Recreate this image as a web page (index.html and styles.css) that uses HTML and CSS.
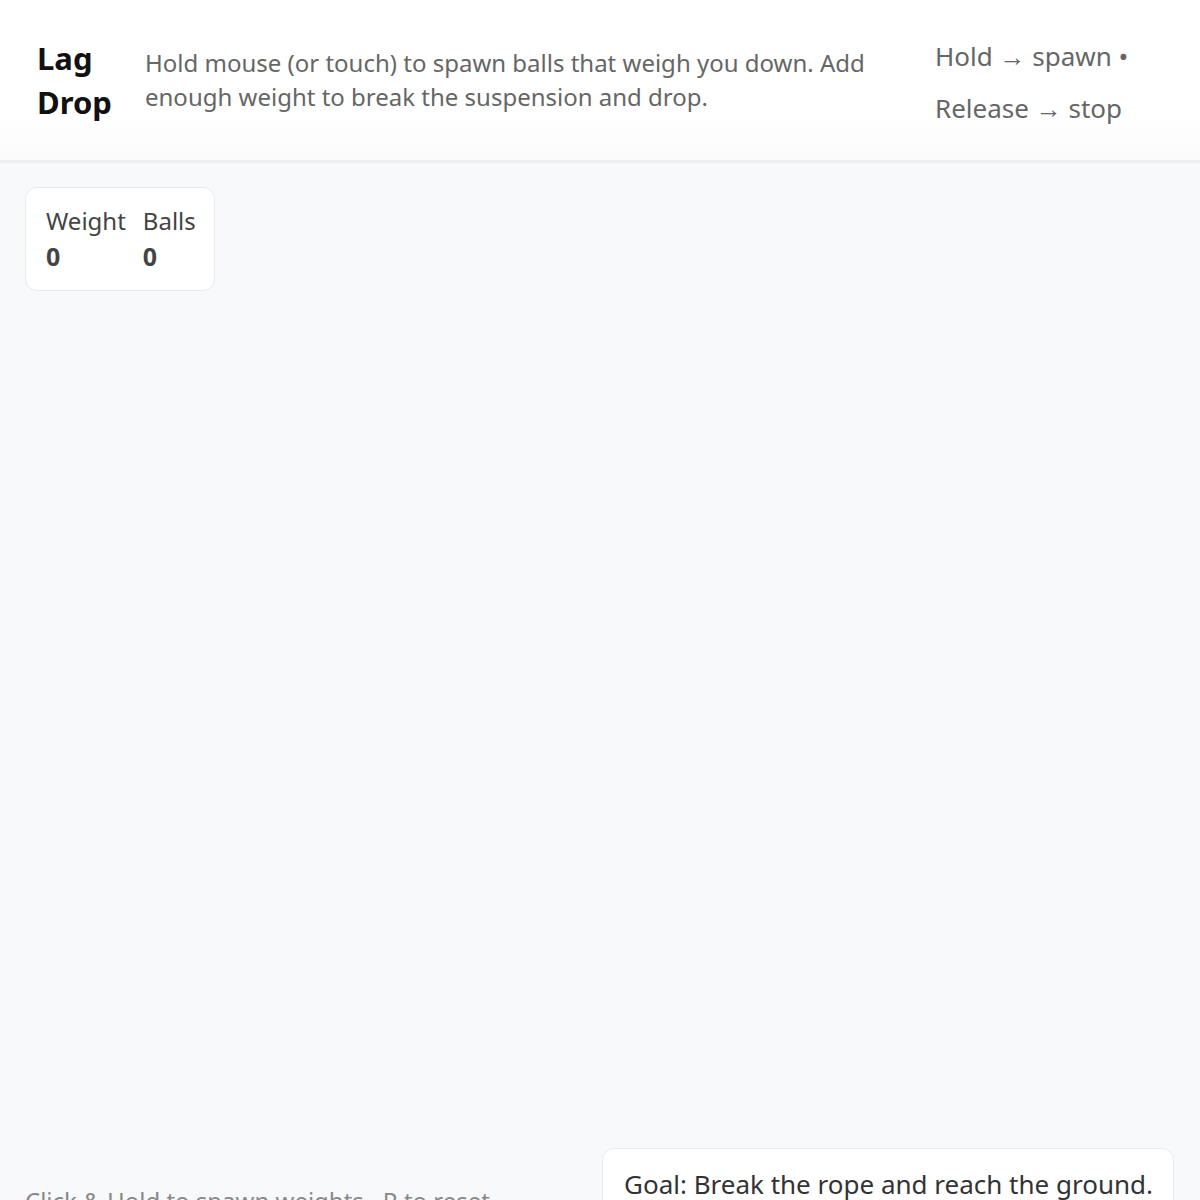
FILE: index.html
```html
<!DOCTYPE html>
<html lang="en">
  <head>
    <meta charset="utf-8">
    <title>Lag Drop</title>
    <meta name="viewport" content="width=device-width">
    <link rel="stylesheet" href="styles.css">
  </head>
  <body>
    <header class="top">
      <h1 class="title">Lag Drop</h1>
      <p class="desc">Hold mouse (or touch) to spawn balls that weigh you down. Add enough weight to break the suspension and drop.</p>
      <div class="help">Hold → spawn • Release → stop</div>
    </header>
    <main class="stage">
      <div class="stats">
        <div class="stat">
          <span class="label">Weight</span>
          <span class="value">0</span>
        </div>
        <div class="stat">
          <span class="label">Balls</span>
          <span class="value">0</span>
        </div>
      </div>
      <div class="bottom">
        <div class="hint">Click &amp; Hold to spawn weights · R to reset</div>
        <div class="goal">Goal: Break the rope and reach the ground.</div>
      </div>
    </main>
  </body>
</html>
```

FILE: styles.css
```css
html, body {
    margin: 0;
    background: #f8f9fb;
    font-family: "Noto Sans", "Open Sans", sans-serif;
    overflow: hidden;
}

.top {
    display: flex;
    align-items: center;
    height: 163px;
    padding: 0 36px 0 37px;
    box-sizing: border-box;
    background: linear-gradient(#ffffff, #ffffff 70%, #fbfbfc);
    border-bottom: 3px solid #eceef1;
}
.title {
    width: 84px;
    margin: 0 24px 0 0;
    font-size: 31px;
    line-height: 44px;
    font-weight: 700;
    color: #111;
}
.desc {
    flex: 1;
    margin: 0 60px 0 0;
    font-size: 24px;
    line-height: 34px;
    color: #666;
    max-width: 730px;
}
.help {
    width: 205px;
    margin-top: 4px;
    font-size: 26px;
    line-height: 52px;
    color: #666;
}

.stage {
    display: flex;
    flex-direction: column;
    height: 1056px;
    padding: 24px 25px 0;
    box-sizing: border-box;
}
.stats {
    display: flex;
    gap: 17px;
    align-self: flex-start;
    padding: 16px 18px 16px 20px;
    background: #fff;
    border: 1px solid #eaeaea;
    border-radius: 12px;
}
.stat {
    display: flex;
    flex-direction: column;
}
.label {
    font-size: 24px;
    line-height: 34px;
    color: #444;
}
.value {
    font-size: 25px;
    line-height: 36px;
    font-weight: 700;
    color: #444;
}

.bottom {
    display: flex;
    justify-content: space-between;
    align-items: flex-start;
    margin-top: auto;
}
.hint {
    margin-top: 36px;
    font-size: 24px;
    color: #888;
}
.goal {
    margin-right: 1px;
    padding: 15px 20px 14px 21px;
    background: #fff;
    border: 1px solid #eaeaea;
    border-radius: 12px;
    font-size: 26px;
    line-height: 40px;
    color: #333;
}
```
